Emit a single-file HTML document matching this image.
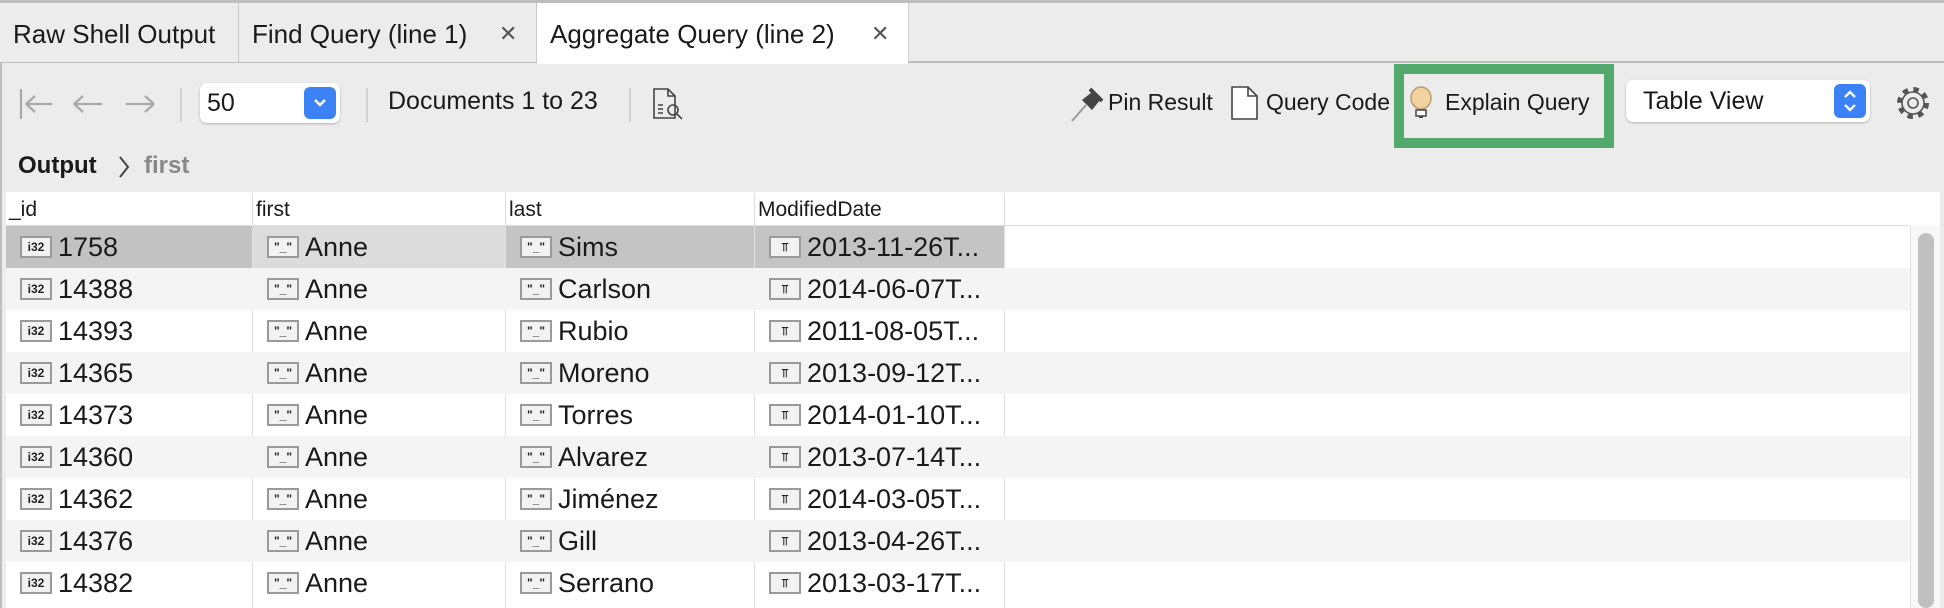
<!DOCTYPE html>
<html><head><meta charset="utf-8"><style>
*{margin:0;padding:0;box-sizing:border-box}
body{width:1944px;height:608px;background:#ececec;font-family:"Liberation Sans",sans-serif;color:#1a1a1a;position:relative;overflow:hidden}
.a{position:absolute}
.tab{position:absolute;top:3px;height:59px;font-size:26px;line-height:62px;padding-left:14px;border-right:1px solid #c8c8c8;background:#ececec;white-space:nowrap}
.x{position:absolute;font-size:22px;color:#555}
.sep{position:absolute;top:88px;width:2px;height:34px;background:#d2d2d2}
.lbl{position:absolute;top:89px;font-size:23px;line-height:26px;white-space:nowrap}
.row{position:absolute;left:6px;width:1904px;height:42px}
.c{position:absolute;top:0;height:42px;font-size:27px;line-height:42px;white-space:nowrap}
.ic{display:inline-block;width:32px;height:22px;border:2px solid #9a9a9a;background:#f2f2f2;font-size:12px;line-height:18px;text-align:center;vertical-align:middle;margin-right:6px;position:relative;top:-2px;color:#222;font-weight:bold}
.hd{position:absolute;top:193px;height:33px;font-size:21px;line-height:33px;border-right:1px solid #ddd;white-space:nowrap}
</style></head><body>
<div class="a" style="left:0;top:0;width:1944px;height:3px;background:#bdbdbd"></div>
<div class="a" style="left:0;top:0;width:2px;height:608px;background:#bdbdbd"></div>
<div class="a" style="left:0;top:61px;width:1944px;height:2px;background:#bdbdbd"></div>
<div class="tab" style="left:0;width:239px;padding-left:13px">Raw Shell Output</div>
<div class="tab" style="left:239px;width:298px;padding-left:13px">Find Query (line 1)<span class="x" style="left:260px;top:0">✕</span></div>
<div class="tab" style="left:537px;width:372px;background:#fff;height:61px;border-right:1px solid #d0d0d0;padding-left:13px">Aggregate Query (line 2)<span class="x" style="left:334px;top:0">✕</span></div>

<svg class="a" style="left:18px;top:88px" width="140" height="32" viewBox="0 0 140 32" fill="none" stroke="#a8a8a8" stroke-width="2.2">
<path d="M3 1V31M8 16H34M8 16L17 8M8 16L17 24"/>
<path d="M56 16H84M56 16L65 8M56 16L65 24"/>
<path d="M108 16H136M136 16L127 8M136 16L127 24"/>
</svg>
<div class="sep" style="left:180px"></div>
<div class="a" style="left:200px;top:83px;width:140px;height:40px;background:#fff;border-radius:7px;box-shadow:0 1px 2px rgba(0,0,0,.25)"><span class="a" style="left:7px;top:6px;font-size:25px">50</span>
<div class="a" style="left:104px;top:4px;width:32px;height:32px;background:#3a82f6;border-radius:6px"><svg width="32" height="32"><path d="M11 13l5 5 5-5" stroke="#fff" stroke-width="2.5" fill="none"/></svg></div></div>
<div class="sep" style="left:366px"></div>
<div class="lbl" style="left:388px;font-size:25px;top:88px">Documents 1 to 23</div>
<div class="sep" style="left:629px"></div>
<svg class="a" style="left:652px;top:87px" width="34" height="34" fill="none" stroke="#444" stroke-width="1.6"><path d="M2 2h14l7 7v22H2z M16 2v7h7"/><path d="M6 18h5M6 22h5M6 26h5"/><circle cx="21" cy="23" r="5"/><path d="M25 27l5 5"/></svg>

<svg class="a" style="left:1070px;top:85px" width="36" height="38"><path d="M2 36L16 20" stroke="#999" stroke-width="2"/><path d="M12 15l10-8 8 8-8 10z" fill="#444"/><path d="M20 4l12 12" stroke="#444" stroke-width="4"/></svg>
<div class="lbl" style="left:1108px">Pin Result</div>
<svg class="a" style="left:1230px;top:86px" width="30" height="34" fill="#fff" stroke="#444" stroke-width="1.6"><path d="M2 1h16l9 9v23H2z"/><path d="M18 1v9h9" fill="none"/></svg>
<div class="lbl" style="left:1266px">Query Code</div>
<div class="a" style="left:1394px;top:64px;width:220px;height:84px;border:10px solid #52a96b"></div>
<svg class="a" style="left:1409px;top:86px" width="24" height="36"><ellipse cx="12" cy="12" rx="10" ry="11" fill="#f2d3a0" stroke="#b59a70" stroke-width="1.4"/><path d="M7 24h10v6H7z" fill="#fff" stroke="#444" stroke-width="1.5"/><path d="M10 31h4" stroke="#444" stroke-width="2"/></svg>
<div class="lbl" style="left:1445px">Explain Query</div>
<div class="a" style="left:1626px;top:80px;width:244px;height:42px;background:#fff;border-radius:7px;box-shadow:0 1px 2px rgba(0,0,0,.25)"><span class="a" style="left:17px;top:7px;font-size:25px">Table View</span>
<div class="a" style="left:208px;top:4px;width:32px;height:34px;background:#3a82f6;border-radius:6px"><svg width="32" height="34"><path d="M11 13l5-5 5 5M11 21l5 5 5-5" stroke="#fff" stroke-width="2.3" fill="none"/></svg></div></div>
<svg class="a" style="left:1896px;top:86px" width="34" height="34" viewBox="0 0 34 34">
<circle cx="17" cy="17" r="13" fill="none" stroke="#555" stroke-width="6" stroke-dasharray="5.1 5.1"/>
<circle cx="17" cy="17" r="11" fill="#ececec" stroke="#555" stroke-width="1.6"/>
<circle cx="17" cy="17" r="5" fill="none" stroke="#555" stroke-width="1.6"/>
</svg>

<div class="a" style="left:18px;top:152px;font-size:24px;font-weight:bold">Output</div>
<svg class="a" style="left:117px;top:155px" width="14" height="24"><path d="M3 2l8 10-8 10" stroke="#444" stroke-width="2" fill="none"/></svg>
<div class="a" style="left:144px;top:152px;font-size:24px;font-weight:bold;color:#888">first</div>

<div class="a" style="left:6px;top:192px;width:1934px;height:416px;background:#fff"></div>
<div class="a" style="left:1910px;top:226px;width:30px;height:382px;background:#f7f7f7;border-left:1px solid #e3e3e3"></div>
<div class="a" style="left:1918px;top:233px;width:16px;height:375px;background:#c0c0c0;border-radius:8px"></div>
<div class="hd" style="left:6px;width:247px;padding-left:3px">_id</div>
<div class="hd" style="left:253px;width:253px;padding-left:3px">first</div>
<div class="hd" style="left:506px;width:249px;padding-left:3px">last</div>
<div class="hd" style="left:755px;width:250px;padding-left:3px">ModifiedDate</div>
<div class="a" style="left:6px;top:225px;width:1904px;height:1px;background:#dedede"></div>
<div class="a" style="left:252px;top:226px;width:1px;height:382px;background:#e2e2e2"></div>
<div class="a" style="left:505px;top:226px;width:1px;height:382px;background:#e2e2e2"></div>
<div class="a" style="left:754px;top:226px;width:1px;height:382px;background:#e2e2e2"></div>
<div class="a" style="left:1004px;top:226px;width:1px;height:382px;background:#e2e2e2"></div>

<div class="row" style="top:226px"><div class="c" style="left:0;width:246px;background:#c2c2c2;padding-left:14px"><span class="ic">i32</span>1758</div><div class="c" style="left:247px;width:252px;background:#dcdcdc;padding-left:14px"><span class="ic">"_"</span>Anne</div><div class="c" style="left:500px;width:248px;background:#c4c4c4;padding-left:14px"><span class="ic">"_"</span>Sims</div><div class="c" style="left:749px;width:249px;background:#c4c4c4;padding-left:14px"><span class="ic">⫪</span>2013-11-26T...</div></div>
<div class="row" style="top:268px;background:#f4f4f4"><div class="c" style="left:0;padding-left:14px"><span class="ic">i32</span>14388</div><div class="c" style="left:247px;padding-left:14px"><span class="ic">"_"</span>Anne</div><div class="c" style="left:500px;padding-left:14px"><span class="ic">"_"</span>Carlson</div><div class="c" style="left:749px;padding-left:14px"><span class="ic">⫪</span>2014-06-07T...</div></div>
<div class="row" style="top:310px"><div class="c" style="left:0;padding-left:14px"><span class="ic">i32</span>14393</div><div class="c" style="left:247px;padding-left:14px"><span class="ic">"_"</span>Anne</div><div class="c" style="left:500px;padding-left:14px"><span class="ic">"_"</span>Rubio</div><div class="c" style="left:749px;padding-left:14px"><span class="ic">⫪</span>2011-08-05T...</div></div>
<div class="row" style="top:352px;background:#f4f4f4"><div class="c" style="left:0;padding-left:14px"><span class="ic">i32</span>14365</div><div class="c" style="left:247px;padding-left:14px"><span class="ic">"_"</span>Anne</div><div class="c" style="left:500px;padding-left:14px"><span class="ic">"_"</span>Moreno</div><div class="c" style="left:749px;padding-left:14px"><span class="ic">⫪</span>2013-09-12T...</div></div>
<div class="row" style="top:394px"><div class="c" style="left:0;padding-left:14px"><span class="ic">i32</span>14373</div><div class="c" style="left:247px;padding-left:14px"><span class="ic">"_"</span>Anne</div><div class="c" style="left:500px;padding-left:14px"><span class="ic">"_"</span>Torres</div><div class="c" style="left:749px;padding-left:14px"><span class="ic">⫪</span>2014-01-10T...</div></div>
<div class="row" style="top:436px;background:#f4f4f4"><div class="c" style="left:0;padding-left:14px"><span class="ic">i32</span>14360</div><div class="c" style="left:247px;padding-left:14px"><span class="ic">"_"</span>Anne</div><div class="c" style="left:500px;padding-left:14px"><span class="ic">"_"</span>Alvarez</div><div class="c" style="left:749px;padding-left:14px"><span class="ic">⫪</span>2013-07-14T...</div></div>
<div class="row" style="top:478px"><div class="c" style="left:0;padding-left:14px"><span class="ic">i32</span>14362</div><div class="c" style="left:247px;padding-left:14px"><span class="ic">"_"</span>Anne</div><div class="c" style="left:500px;padding-left:14px"><span class="ic">"_"</span>Jiménez</div><div class="c" style="left:749px;padding-left:14px"><span class="ic">⫪</span>2014-03-05T...</div></div>
<div class="row" style="top:520px;background:#f4f4f4"><div class="c" style="left:0;padding-left:14px"><span class="ic">i32</span>14376</div><div class="c" style="left:247px;padding-left:14px"><span class="ic">"_"</span>Anne</div><div class="c" style="left:500px;padding-left:14px"><span class="ic">"_"</span>Gill</div><div class="c" style="left:749px;padding-left:14px"><span class="ic">⫪</span>2013-04-26T...</div></div>
<div class="row" style="top:562px"><div class="c" style="left:0;padding-left:14px"><span class="ic">i32</span>14382</div><div class="c" style="left:247px;padding-left:14px"><span class="ic">"_"</span>Anne</div><div class="c" style="left:500px;padding-left:14px"><span class="ic">"_"</span>Serrano</div><div class="c" style="left:749px;padding-left:14px"><span class="ic">⫪</span>2013-03-17T...</div></div>
</body></html>
